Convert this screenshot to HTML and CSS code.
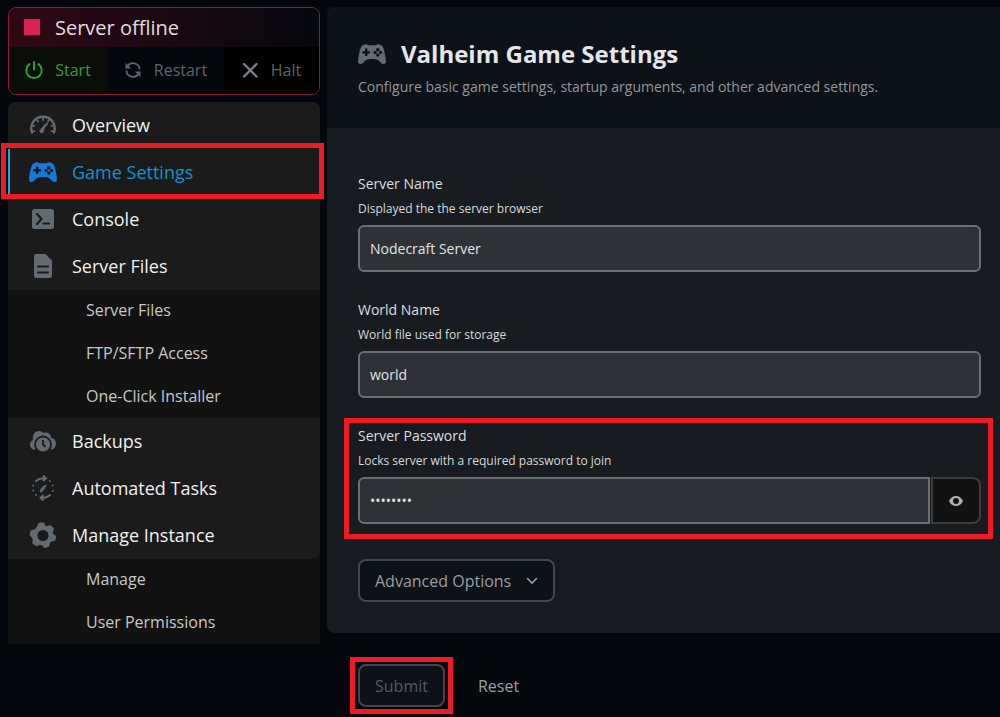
FILE: index.html
```html
<!DOCTYPE html>
<html lang="en">
<head>
<meta charset="utf-8">
<meta name="viewport" content="width=device-width, initial-scale=1">
<title>Valheim Game Settings</title>
<link rel="stylesheet" href="styles.css">
</head>
<body>
<svg class="defs" aria-hidden="true">
  <symbol id="gamepad" viewBox="0 0 28 20">
    <path fill="currentColor" fill-rule="evenodd" d="M7.500 0.300C8.900 0 9.700 1.200 11 1.200H17C18.300 1.200 19.100 0 20.500.300C23 .700 24.600 1.700 25.400 4C26.600 8 27.900 13.500 27.900 17.500C27.900 19.300 26.900 20 25.600 20C24 20 23 19.200 22.200 18C20.500 15.500 17.500 15 14 15C10.500 15 7.500 15.500 5.800 18C5 19.200 4 20 2.400 20C1.100 20 .100 19.300 .100 17.500C.100 13.500 1.400 8 2.600 4C3.400 1.700 5 .700 7.500.300ZM7 4.600V7.200H4.400V9.400H7V12H9.400V9.400H12V7.200H9.400V4.600ZM19.800 4A1.700 1.700 0 1 0 19.800 7.400A1.700 1.700 0 1 0 19.800 4ZM17.100 6.700A1.700 1.700 0 1 0 17.100 10.100A1.700 1.700 0 1 0 17.100 6.700ZM22.500 6.700A1.700 1.700 0 1 0 22.500 10.100A1.700 1.700 0 1 0 22.500 6.700ZM19.800 9.400A1.700 1.700 0 1 0 19.800 12.800A1.700 1.700 0 1 0 19.800 9.400Z"/>
  </symbol>
</svg>
<div class="layout">
  <aside class="sidebar">
    <section class="status">
      <h2 class="status-title"><span class="stop"></span>Server offline</h2>
      <div class="power">
        <button class="power-btn start" type="button"><svg width="20" height="20" viewBox="0 0 20 20" fill="none" stroke="currentColor" stroke-width="2" stroke-linecap="round"><path d="M10 2V9.500M5.500 4.100A7.700 7.700 0 1 0 14.500 4.100"/></svg>Start</button>
        <button class="power-btn restart" type="button"><svg width="20" height="20" viewBox="0 0 20 20"><path fill="none" stroke="currentColor" stroke-width="1.800" d="M4.300 6.500A6.500 6.500 0 0 1 16.500 9.500M3.500 10.500A6.500 6.500 0 0 0 15.700 13.500"/><path fill="currentColor" d="M2.500 2.800V8.500H8.200ZM17.500 17.200V11.500H11.800Z"/></svg>Restart</button>
        <button class="power-btn halt" type="button"><svg width="20" height="20" viewBox="0 0 20 20" fill="none" stroke="currentColor" stroke-width="2.400" stroke-linecap="round"><path d="M4 4L16.500 16.500M16.500 4L4 16.500"/></svg>Halt</button>
      </div>
    </section>
    <nav class="nav" aria-label="Server">
      <a class="item" href="#overview"><svg width="28" height="28" viewBox="0 0 28 28" fill="none" stroke="currentColor" stroke-linecap="round"><path stroke-width="2.400" d="M3 21.500C.300 13 6 5.700 14 5.700S27.700 13 25 21.500"/><path stroke-width="1.800" d="M14 7V9M8 9L9 10.500M20 9L19 10.500M3.500 14.500L5.500 15M24.500 14.500L22.500 15M3.500 20.500L5.500 20M24.500 20.500L22.500 20"/><path stroke-width="2" d="M18 12.800L13.500 17.500"/><path fill="currentColor" stroke="none" d="M16.700 13L11.400 18.200A2.200 2.200 0 1 0 14.800 20.500Z"/></svg>Overview</a>
      <a class="item active" href="#settings" aria-current="page"><svg width="28" height="20"><use href="#gamepad"/></svg>Game Settings<span class="mark mark-nav"></span></a>
      <a class="item" href="#console"><svg width="28" height="28" viewBox="0 0 28 28"><rect x="3" y="4" width="22" height="20" rx="2.500" fill="currentColor"/><path d="M8 9L12.500 14L8 19M14.500 18.500H20" fill="none" stroke="#1b1b1b" stroke-width="2.200" stroke-linecap="round" stroke-linejoin="round"/></svg>Console</a>
      <a class="item" href="#files"><svg width="28" height="28" viewBox="0 0 28 28"><path fill="currentColor" d="M7 2H16.500L23 8.500V23.500Q23 26 20.500 26H7.500Q5 26 5 23.500V4Q5 2 7 2Z"/><path d="M9 14.500H19M9 20.500H19" fill="none" stroke="#1b1b1b" stroke-width="2.200" stroke-linecap="round"/></svg>Server Files</a>
      <div class="sub">
        <a href="#server-files">Server Files</a>
        <a href="#ftp">FTP/SFTP Access</a>
        <a href="#installer">One-Click Installer</a>
      </div>
      <a class="item" href="#backups"><svg width="28" height="28" viewBox="0 0 28 28"><path fill="currentColor" d="M4 22.500C0 20.500 0 14.500 4.200 13C3 8 5.500 4 10 4C12 4 13.500 5 14.500 6C19 4.500 22 7.500 22 11C26 11.500 27.500 14.500 26.800 18C26.200 21.500 24 22.800 21.500 22.500Z"/><circle cx="14" cy="17.500" r="8" fill="currentColor" stroke="#1b1b1b" stroke-width="1.800"/><path d="M14 13V17.500L16.500 20" fill="none" stroke="#1b1b1b" stroke-width="1.800"/></svg>Backups</a>
      <a class="item" href="#tasks"><svg width="28" height="28" viewBox="0 0 28 28" fill="none" stroke="currentColor" stroke-width="2" stroke-linecap="round"><path d="M7 7.200C9.500 4.500 12.500 4 16 4.200M14.500 2L17 4.200L14.500 6.400M21 21C18.500 23.500 15.500 24 12 23.800M14 21.600L11.600 23.800L14 26"/><path d="M16.800 11.500L14 15.200" stroke-width="1.800"/><path d="M14.700 13.200L12 17" stroke-width="2.600"/><path d="M20.800 7V7M23.600 11.500V11.500M23.800 17V17M4.200 11.500V11.500M4.200 16.500V16.500M7 21V21"/></svg>Automated Tasks</a>
      <a class="item" href="#instance"><svg width="28" height="28" viewBox="0 0 28 28"><path fill="currentColor" stroke="currentColor" stroke-width="2" stroke-linejoin="round" fill-rule="evenodd" d="M10.500 2.500H14.200L15.500 5.500L18 6.500L21.200 5.200L24 8L22.800 11.200L23.500 13.800L26.200 15.500L25.300 19L22 19.500L20 21.300L19.500 24.700L15.800 26L13.500 23.300L10.500 22.800L7.500 24.300L4.300 22L4.800 18.700L3.900 16.200L1.800 14L2.500 10.200L6 9.200L8 7.500ZM14 8A6.500 6.500 0 1 0 14 21A6.500 6.500 0 1 0 14 8Z"/></svg>Manage Instance</a>
      <div class="sub">
        <a href="#manage">Manage</a>
        <a href="#permissions">User Permissions</a>
      </div>
    </nav>
  </aside>
  <main class="main">
    <form class="form">
      <div class="card">
        <header class="card-head">
          <h1><svg width="28" height="20"><use href="#gamepad"/></svg>Valheim Game Settings</h1>
          <p>Configure basic game settings, startup arguments, and other advanced settings.</p>
        </header>
        <div class="card-body">
          <div class="field">
            <label for="name">Server Name</label>
            <p id="name-help">Displayed the the server browser</p>
            <input id="name" type="text" value="Nodecraft Server" aria-describedby="name-help">
          </div>
          <div class="field">
            <label for="world">World Name</label>
            <p id="world-help">World file used for storage</p>
            <input id="world" type="text" value="world" aria-describedby="world-help">
          </div>
          <div class="field">
            <label for="pass">Server Password</label>
            <p id="pass-help">Locks server with a required password to join</p>
            <div class="group">
              <input id="pass" type="password" value="password" aria-describedby="pass-help">
              <button class="reveal" type="button" aria-label="Show password"><svg width="16" height="14" viewBox="0 0 16 14"><path fill="currentColor" fill-rule="evenodd" d="M1 7C2.500 3.700 5 1.900 8 1.900S13.500 3.700 15 7C13.500 10.300 11 12.100 8 12.100S2.500 10.300 1 7ZM8 4A3 3 0 1 0 8 10A3 3 0 1 0 8 4Z"/></svg></button>
            </div>
            <span class="mark mark-field"></span>
          </div>
          <button class="btn advanced" type="button">Advanced Options<svg width="12" height="8" viewBox="0 0 12 8" fill="none" stroke="currentColor" stroke-width="1.600" stroke-linecap="round"><path d="M1.500 1.500L6 6L10.500 1.500"/></svg></button>
        </div>
      </div>
      <div class="actions">
        <span class="submit-wrap"><button class="btn submit" type="submit">Submit</button><span class="mark mark-submit"></span></span>
        <button class="btn reset" type="reset">Reset</button>
      </div>
    </form>
  </main>
</div>
</body>
</html>
```
FILE: styles.css
```css
* { box-sizing: border-box; }
body {
  margin: 0;
  min-height: 100vh;
  background: #04070c;
  color: #d8dadc;
  font-family: "Open Sans", "Noto Sans", sans-serif;
  font-size: 16px;
}
button, input { font: inherit; color: inherit; margin: 0; }
button { cursor: pointer; }
a { color: inherit; text-decoration: none; }
h1, h2, p { margin: 0; }
svg { flex: none; }
.defs { position: absolute; width: 0; height: 0; }

.layout {
  display: grid;
  grid-template-columns: 312px minmax(0, 1fr);
  gap: 7px;
  padding: 7px 0 0 8px;
}
.sidebar { display: flex; flex-direction: column; gap: 7px; }

.status {
  border: 1px solid #8c1a3a;
  border-radius: 8px;
  overflow: hidden;
}
.status-title {
  display: flex;
  align-items: center;
  gap: 15px;
  height: 39px;
  padding: 0 0 1px 15px;
  background: linear-gradient(90deg, #300815, #06080e);
  color: #e0dce0;
  font-size: 20px;
  font-weight: 400;
}
.stop { width: 16px; height: 16px; background: #d9224f; }
.power { display: flex; }
.power-btn {
  display: flex;
  align-items: center;
  justify-content: center;
  gap: 11px;
  height: 47px;
  padding: 0 2px 1px 0;
  border: 0;
  color: #5f6368;
}
.start { flex: 99; background: #0a0d08; color: #2aa32a; }
.restart { flex: 116; background: #04070c; }
.halt { flex: 95; background: #000; }
.halt svg { color: #7a7f86; }

.nav { background: #121212; border-radius: 8px 8px 0 0; }
.item {
  position: relative;
  display: flex;
  align-items: center;
  gap: 15px;
  height: 47px;
  padding: 0 0 1px 21px;
  background: #1b1b1b;
  color: #f0f0f0;
  font-size: 18px;
}
.item:first-child { border-radius: 8px 8px 0 0; }
.item:nth-last-child(2) { border-radius: 0 0 8px 0; }
.item svg { color: #646a72; }
.item.active { color: #1193d0; border-left: 2px solid #12a5e0; padding-left: 19px; }
.item.active svg { color: #1679d9; }
.sub { margin-top: -1px; }
.sub a { display: block; padding-left: 78px; line-height: 43px; color: #c8c8c8; }

.mark {
  position: absolute;
  border: 5px solid #ed1c24;
  pointer-events: none;
  z-index: 1;
}
.mark-nav { inset: -6px -4px -3px -9px; }
.mark-field { inset: -6px -12px -15px -14px; }
.mark-submit { inset: -7px -8px; }

.card { border-radius: 8px 0 0 8px; background: #181c20; overflow: hidden; }
.card-head { padding: 30px 31px 29px; background: #0d1118; }
.card-head h1 {
  display: flex;
  align-items: center;
  gap: 15px;
  font-size: 24px;
  line-height: 34px;
  font-weight: 700;
  color: #e4e6e9;
}
.card-head svg { color: #646a72; }
.card-head p { padding-top: 4px; font-size: 14px; line-height: 24px; color: #94979b; }
.card-body { padding: 44px 19px 31px 31px; }
.field { position: relative; margin-bottom: 26px; }
.field label { display: block; font-size: 14px; line-height: 24px; color: #dcdee0; }
.field p { font-size: 12px; line-height: 26px; color: #d8dadc; }
.field input {
  display: block;
  width: 100%;
  height: 47px;
  margin-top: 3px;
  padding: 0 10px 1px;
  border: 2px solid #6a6f74;
  border-radius: 6px;
  background: #2e3236;
  color: #e0e2e4;
  font-size: 14px;
}
.group { display: flex; gap: 1px; margin-top: 3px; }
.field .group input { flex: 1; min-width: 0; margin: 0; border-radius: 6px 0 0 6px; }
.reveal {
  display: flex;
  align-items: center;
  justify-content: center;
  width: 50px;
  padding: 0;
  border: 2px solid #3c3d3d;
  border-radius: 0 8px 8px 0;
  background: #121212;
  color: #b0b0b0;
}
.btn {
  display: flex;
  align-items: center;
  height: 43px;
  padding: 0 15px;
  border: 2px solid #43474b;
  border-radius: 8px;
  background: #0d1118;
  color: #9b9ea2;
}
.advanced { gap: 15px; margin-top: 35px; }
.actions { display: flex; gap: 16px; padding: 31px; }
.submit-wrap { position: relative; }
.submit { color: #565b62; }
.reset { border-color: transparent; background: none; }
```
